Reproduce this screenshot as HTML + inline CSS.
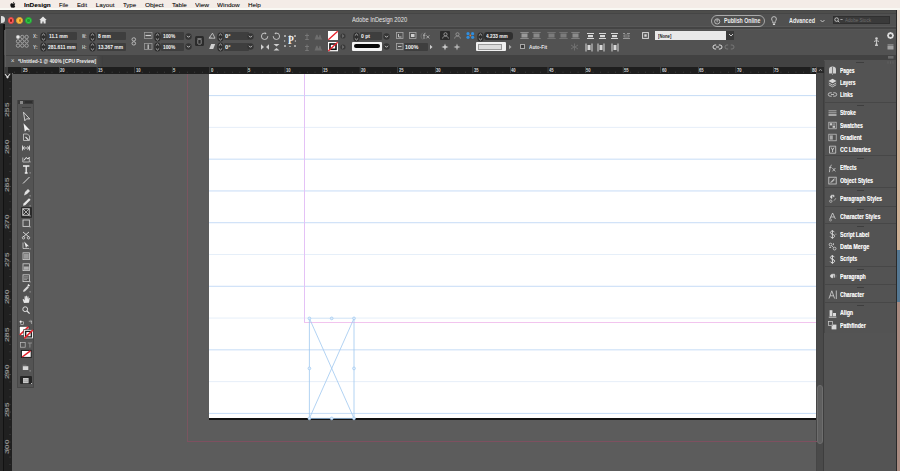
<!DOCTYPE html><html><head><meta charset="utf-8"><style>
*{margin:0;padding:0;box-sizing:border-box}
html,body{width:900px;height:471px;overflow:hidden;background:#5c5c5c;font-family:"Liberation Sans",sans-serif}
.a{position:absolute}
.t{position:absolute;white-space:nowrap;line-height:1}
svg{position:absolute;overflow:visible}
</style></head><body>
<div class="a" style="left:0px;top:0px;width:900px;height:8px;background:#f4ece7;"></div>
<div class="a" style="left:0px;top:8px;width:900px;height:1.6px;background:#f9f8f3;"></div>
<div class="a" style="left:0px;top:9.6px;width:900px;height:0.9px;background:#3c3c3a;"></div>
<svg style="left:9.5px;top:1px" width="6" height="8" viewBox="0 0 6 8"><path d="M4.6 4.3c0-.9.7-1.3.7-1.3-.4-.6-1-.7-1.2-.7-.5-.1-1 .3-1.3.3s-.7-.3-1.1-.3C1 2.3.3 2.8.3 3.9c0 .7.3 1.5.6 2 .3.4.6.9 1 .9.3 0 .5-.3 1-.3s.6.3 1 .3c.4 0 .7-.4.9-.8.3-.4.4-.8.4-.8s-.6-.2-.6-.9zM3.9 1.7c.2-.3.4-.6.3-1-.3 0-.7.2-.9.5-.2.2-.4.6-.3.9.3 0 .7-.2.9-.4z" fill="#151515"/></svg>
<div class="t" style="left:24.00px;top:1.61px;font-size:6.2px;color:#0a0a0a;font-weight:bold;transform:scaleX(1.021);transform-origin:0 0;text-shadow:.2px 0 0 rgba(0,0,0,.35)">InDesign</div>
<div class="t" style="left:59.20px;top:1.61px;font-size:6.2px;color:#0a0a0a;transform:scaleX(0.911);transform-origin:0 0;text-shadow:.2px 0 0 rgba(0,0,0,.35)">File</div>
<div class="t" style="left:76.70px;top:1.61px;font-size:6.2px;color:#0a0a0a;transform:scaleX(0.937);transform-origin:0 0;text-shadow:.2px 0 0 rgba(0,0,0,.35)">Edit</div>
<div class="t" style="left:95.80px;top:1.61px;font-size:6.2px;color:#0a0a0a;text-shadow:.2px 0 0 rgba(0,0,0,.35)">Layout</div>
<div class="t" style="left:123.10px;top:1.61px;font-size:6.2px;color:#0a0a0a;transform:scaleX(0.976);transform-origin:0 0;text-shadow:.2px 0 0 rgba(0,0,0,.35)">Type</div>
<div class="t" style="left:144.70px;top:1.61px;font-size:6.2px;color:#0a0a0a;transform:scaleX(1.040);transform-origin:0 0;text-shadow:.2px 0 0 rgba(0,0,0,.35)">Object</div>
<div class="t" style="left:172.00px;top:1.61px;font-size:6.2px;color:#0a0a0a;text-shadow:.2px 0 0 rgba(0,0,0,.35)">Table</div>
<div class="t" style="left:194.70px;top:1.61px;font-size:6.2px;color:#0a0a0a;transform:scaleX(1.052);transform-origin:0 0;text-shadow:.2px 0 0 rgba(0,0,0,.35)">View</div>
<div class="t" style="left:216.70px;top:1.61px;font-size:6.2px;color:#0a0a0a;transform:scaleX(1.027);transform-origin:0 0;text-shadow:.2px 0 0 rgba(0,0,0,.35)">Window</div>
<div class="t" style="left:248.00px;top:1.61px;font-size:6.2px;color:#0a0a0a;text-shadow:.2px 0 0 rgba(0,0,0,.35)">Help</div>
<div class="a" style="left:0px;top:10px;width:897px;height:461px;background:#464646;"></div>
<div class="a" style="left:897px;top:10px;width:3px;height:120px;background:#eadbd0;"></div>
<div class="a" style="left:897px;top:130px;width:3px;height:120px;background:#cfb195;"></div>
<div class="a" style="left:897px;top:250px;width:3px;height:52px;background:#557893;"></div>
<div class="a" style="left:897px;top:302px;width:3px;height:169px;background:#a88a80;"></div>
<div class="a" style="left:896px;top:10px;width:1px;height:461px;background:#2a2a2a;"></div>
<div class="a" style="left:0px;top:10.5px;width:896px;height:16px;background:#505050;"></div>
<div class="a" style="left:0px;top:10.5px;width:896px;height:2.5px;background:#4d4d4b;"></div>
<div class="a" style="left:0px;top:13px;width:896px;height:0.8px;background:#454545;"></div>
<div class="a" style="left:0px;top:26px;width:896px;height:1px;background:#575757;"></div>
<div class="a" style="left:0px;top:27.3px;width:896px;height:1.4px;background:#444444;"></div>
<div class="a" style="left:0px;top:28.7px;width:896px;height:1px;background:#565656;"></div>
<div class="a" style="left:7.6px;top:17.2px;width:6.8px;height:6.8px;border-radius:50%;background:#fc605c;border:0.6px solid #de4b46"></div>
<div class="a" style="left:16.3px;top:17.2px;width:6.8px;height:6.8px;border-radius:50%;background:#fdbc40;border:0.6px solid #dea236"></div>
<div class="a" style="left:25.0px;top:17.2px;width:6.8px;height:6.8px;border-radius:50%;background:#34c84a;border:0.6px solid #27aa35"></div>
<div class="a" style="left:9.6px;top:19.2px;width:2.8px;height:2.8px;background:#8c1a12;border-radius:50%"></div>
<div class="a" style="left:18.5px;top:19.2px;width:2.6px;height:2.6px;background:#c27d12;border-radius:50%"></div>
<div class="a" style="left:27.2px;top:19.2px;width:2.6px;height:2.6px;background:#1f9a2e;border-radius:50%"></div>
<svg style="left:39px;top:16px" width="8" height="8" viewBox="0 0 8 8"><path d="M4 .5L.3 4h1.1v3.5h2v-2h1.2v2h2V4h1.1z" fill="#e6e6e6"/></svg>
<div class="a" style="left:0px;top:24px;width:3px;height:447px;background:#262626;"></div>
<div class="a" style="left:3px;top:24px;width:1.5px;height:447px;background:#121212;"></div>
<div class="a" style="left:1px;top:15.5px;width:3.5px;height:7px;background:#dcdcdc;border-radius:0 4px 4px 0"></div>
<div class="t" style="left:352.00px;top:16.52px;font-size:6.8px;color:#e4e4e4;transform:scaleX(0.843);transform-origin:0 0;">Adobe InDesign 2020</div>
<div class="a" style="left:710.5px;top:14.6px;width:54.5px;height:12.6px;border-radius:7px;border:1px solid #a9a9a9"></div>
<svg style="left:714px;top:17.6px" width="7" height="7" viewBox="0 0 7 7"><circle cx="3.2" cy="3.4" r="2.6" fill="none" stroke="#cfcfcf" stroke-width=".8"/><path d="M3.2 4.2V1.6M2.2 2.5l1-1 1 1" fill="none" stroke="#cfcfcf" stroke-width=".7"/></svg>
<div class="t" style="left:724.00px;top:17.92px;font-size:6.8px;color:#efefef;font-weight:bold;transform:scaleX(0.765);transform-origin:0 0;">Publish Online</div>
<svg style="left:771px;top:15.6px" width="6" height="10" viewBox="0 0 6 10"><path d="M3 .6A2.4 2.4 0 0 0 .6 3c0 1.1.9 1.8 1.2 2.6v1.3h2.4V5.6C4.5 4.8 5.4 4.1 5.4 3A2.4 2.4 0 0 0 3 .6z" fill="none" stroke="#d8d8d8" stroke-width=".8"/><rect x="1.9" y="7.6" width="2.2" height="1.4" fill="#d8d8d8"/></svg>
<div class="a" style="left:782px;top:14px;width:1px;height:12px;background:#505050;"></div>
<div class="t" style="left:789.30px;top:17.72px;font-size:6.8px;color:#efefef;font-weight:bold;transform:scaleX(0.800);transform-origin:0 0;">Advanced</div>
<svg style="left:819.5px;top:19.3px" width="5" height="4" viewBox="0 0 5 4"><path d="M.5 1l2 2 2-2" fill="none" stroke="#cfcfcf" stroke-width=".9"/></svg>
<div class="a" style="left:832.5px;top:16px;width:57px;height:8px;background:#3a3a3a;border:0.6px solid #303030"></div>
<svg style="left:834px;top:17px" width="10" height="6" viewBox="0 0 10 6"><circle cx="2.6" cy="2.6" r="1.8" fill="none" stroke="#ddd" stroke-width=".8"/><path d="M4 4l1.3 1.3M6.5 2l1 1 1-1" fill="none" stroke="#ddd" stroke-width=".8"/></svg>
<div class="t" style="left:845.00px;top:17.31px;font-size:6px;color:#6e6e6e;transform:scaleX(0.764);transform-origin:0 0;">Adobe Stock</div>
<div class="a" style="left:4px;top:29.7px;width:892px;height:25.3px;background:#525252;"></div>
<svg style="left:15.5px;top:35px" width="13" height="13" viewBox="0 0 13 13"><circle cx="2.0" cy="2.0" r="1.7" fill="#e8e8e8" stroke="#bdbdbd" stroke-width=".7"/><circle cx="2.0" cy="6.3" r="1.7" fill="none" stroke="#bdbdbd" stroke-width=".7"/><circle cx="2.0" cy="10.6" r="1.7" fill="none" stroke="#bdbdbd" stroke-width=".7"/><circle cx="6.3" cy="2.0" r="1.7" fill="none" stroke="#bdbdbd" stroke-width=".7"/><circle cx="6.3" cy="6.3" r="1.7" fill="none" stroke="#bdbdbd" stroke-width=".7"/><circle cx="6.3" cy="10.6" r="1.7" fill="none" stroke="#bdbdbd" stroke-width=".7"/><circle cx="10.6" cy="2.0" r="1.7" fill="none" stroke="#bdbdbd" stroke-width=".7"/><circle cx="10.6" cy="6.3" r="1.7" fill="none" stroke="#bdbdbd" stroke-width=".7"/><circle cx="10.6" cy="10.6" r="1.7" fill="none" stroke="#bdbdbd" stroke-width=".7"/></svg>
<div class="t" style="left:33.00px;top:33.11px;font-size:6px;color:#cdcdcd;font-weight:bold;transform:scaleX(0.750);transform-origin:0 0;">X:</div>
<div class="t" style="left:33.00px;top:43.81px;font-size:6px;color:#cdcdcd;font-weight:bold;transform:scaleX(0.809);transform-origin:0 0;">Y:</div>
<svg style="left:39.5px;top:31.5px" width="7" height="10" viewBox="0 0 7 10"><ellipse cx="3.5" cy="5" rx="3.3" ry="4.6" fill="#2e2e2e"/><path d="M1.8 3.6l1.7-1.6 1.7 1.6M1.8 6.4l1.7 1.6 1.7-1.6" fill="none" stroke="#d0d0d0" stroke-width=".8"/></svg>
<svg style="left:39.5px;top:42px" width="7" height="10" viewBox="0 0 7 10"><ellipse cx="3.5" cy="5" rx="3.3" ry="4.6" fill="#2e2e2e"/><path d="M1.8 3.6l1.7-1.6 1.7 1.6M1.8 6.4l1.7 1.6 1.7-1.6" fill="none" stroke="#d0d0d0" stroke-width=".8"/></svg>
<div class="a" style="left:47px;top:32px;width:30px;height:8px;background:#3e3e3e;border-radius:1px"></div>
<div class="a" style="left:47px;top:42.5px;width:30px;height:8px;background:#3e3e3e;border-radius:1px"></div>
<div class="t" style="left:48.60px;top:33.11px;font-size:6.0px;color:#f6f6f6;font-weight:bold;transform:scaleX(0.794);transform-origin:0 0;">11.1 mm</div>
<div class="t" style="left:48.20px;top:43.81px;font-size:6.0px;color:#f6f6f6;font-weight:bold;transform:scaleX(0.819);transform-origin:0 0;">281.611 mm</div>
<div class="t" style="left:82.00px;top:33.11px;font-size:6px;color:#cdcdcd;font-weight:bold;transform:scaleX(0.595);transform-origin:0 0;">W:</div>
<div class="t" style="left:82.00px;top:43.81px;font-size:6px;color:#cdcdcd;font-weight:bold;transform:scaleX(0.709);transform-origin:0 0;">H:</div>
<svg style="left:88.5px;top:31.5px" width="7" height="10" viewBox="0 0 7 10"><ellipse cx="3.5" cy="5" rx="3.3" ry="4.6" fill="#2e2e2e"/><path d="M1.8 3.6l1.7-1.6 1.7 1.6M1.8 6.4l1.7 1.6 1.7-1.6" fill="none" stroke="#d0d0d0" stroke-width=".8"/></svg>
<svg style="left:88.5px;top:42px" width="7" height="10" viewBox="0 0 7 10"><ellipse cx="3.5" cy="5" rx="3.3" ry="4.6" fill="#2e2e2e"/><path d="M1.8 3.6l1.7-1.6 1.7 1.6M1.8 6.4l1.7 1.6 1.7-1.6" fill="none" stroke="#d0d0d0" stroke-width=".8"/></svg>
<div class="a" style="left:96.5px;top:32px;width:29px;height:8px;background:#3e3e3e;border-radius:1px"></div>
<div class="a" style="left:96.5px;top:42.5px;width:29px;height:8px;background:#3e3e3e;border-radius:1px"></div>
<div class="t" style="left:98.00px;top:33.11px;font-size:6.0px;color:#f6f6f6;font-weight:bold;transform:scaleX(0.816);transform-origin:0 0;">8 mm</div>
<div class="t" style="left:98.00px;top:43.81px;font-size:6.0px;color:#f6f6f6;font-weight:bold;transform:scaleX(0.814);transform-origin:0 0;">13.367 mm</div>
<svg style="left:131px;top:37px" width="6" height="9" viewBox="0 0 6 9"><rect x="1" y=".8" width="3.6" height="3.2" rx="1.6" fill="none" stroke="#cfcfcf" stroke-width=".8"/><rect x="1" y="4.8" width="3.6" height="3.2" rx="1.6" fill="none" stroke="#cfcfcf" stroke-width=".8"/></svg>
<svg style="left:144px;top:32px" width="9" height="7" viewBox="0 0 9 7"><rect x=".5" y=".5" width="7.5" height="6" fill="none" stroke="#9a9a9a" stroke-width=".8"/><path d="M1.5 3.5h5.5" stroke="#cfcfcf" stroke-width="1.2"/></svg>
<svg style="left:144px;top:43px" width="9" height="7" viewBox="0 0 9 7"><rect x=".5" y=".5" width="7.5" height="6" fill="none" stroke="#9a9a9a" stroke-width=".8"/><path d="M4.2 1.5v4.5" stroke="#cfcfcf" stroke-width="1.2"/></svg>
<svg style="left:153.5px;top:31.5px" width="7" height="10" viewBox="0 0 7 10"><ellipse cx="3.5" cy="5" rx="3.3" ry="4.6" fill="#2e2e2e"/><path d="M1.8 3.6l1.7-1.6 1.7 1.6M1.8 6.4l1.7 1.6 1.7-1.6" fill="none" stroke="#d0d0d0" stroke-width=".8"/></svg>
<svg style="left:153.5px;top:42px" width="7" height="10" viewBox="0 0 7 10"><ellipse cx="3.5" cy="5" rx="3.3" ry="4.6" fill="#2e2e2e"/><path d="M1.8 3.6l1.7-1.6 1.7 1.6M1.8 6.4l1.7 1.6 1.7-1.6" fill="none" stroke="#d0d0d0" stroke-width=".8"/></svg>
<div class="a" style="left:161px;top:32px;width:23px;height:8px;background:#3e3e3e;border-radius:1px"></div>
<div class="a" style="left:161px;top:42.5px;width:23px;height:8px;background:#3e3e3e;border-radius:1px"></div>
<div class="t" style="left:162.80px;top:33.11px;font-size:6.0px;color:#f6f6f6;font-weight:bold;transform:scaleX(0.794);transform-origin:0 0;">100%</div>
<div class="t" style="left:162.80px;top:43.81px;font-size:6.0px;color:#f6f6f6;font-weight:bold;transform:scaleX(0.794);transform-origin:0 0;">100%</div>
<svg style="left:184.5px;top:32.5px" width="7" height="7" viewBox="0 0 7 7"><circle cx="3.5" cy="3.5" r="3.2" fill="#353535"/><path d="M2 2.8l1.5 1.5 1.5-1.5" fill="none" stroke="#d0d0d0" stroke-width=".9"/></svg>
<svg style="left:184.5px;top:43px" width="7" height="7" viewBox="0 0 7 7"><circle cx="3.5" cy="3.5" r="3.2" fill="#353535"/><path d="M2 2.8l1.5 1.5 1.5-1.5" fill="none" stroke="#d0d0d0" stroke-width=".9"/></svg>
<div class="a" style="left:194.5px;top:36.3px;width:9px;height:9.5px;background:#2b2b2b;border-radius:1.5px"></div>
<svg style="left:196.5px;top:37.5px" width="5" height="7" viewBox="0 0 5 7"><rect x=".8" y="1.2" width="3.4" height="5" rx=".8" fill="none" stroke="#9c9c9c" stroke-width=".8"/><path d="M.3 .8h4.4" stroke="#9c9c9c" stroke-width=".8"/></svg>
<svg style="left:207.5px;top:32px" width="8" height="7" viewBox="0 0 8 7"><path d="M1 6.2h6L4.5 1.2z" fill="none" stroke="#cfcfcf" stroke-width=".8"/><path d="M3 6.2a2 2 0 0 0-.6-1.6" fill="none" stroke="#cfcfcf" stroke-width=".7"/></svg>
<svg style="left:207.5px;top:43px" width="8" height="7" viewBox="0 0 8 7"><path d="M1.2 6l2-5h4l-2 5z" fill="#cfcfcf"/></svg>
<svg style="left:216.5px;top:31.5px" width="7" height="10" viewBox="0 0 7 10"><ellipse cx="3.5" cy="5" rx="3.3" ry="4.6" fill="#2e2e2e"/><path d="M1.8 3.6l1.7-1.6 1.7 1.6M1.8 6.4l1.7 1.6 1.7-1.6" fill="none" stroke="#d0d0d0" stroke-width=".8"/></svg>
<svg style="left:216.5px;top:42px" width="7" height="10" viewBox="0 0 7 10"><ellipse cx="3.5" cy="5" rx="3.3" ry="4.6" fill="#2e2e2e"/><path d="M1.8 3.6l1.7-1.6 1.7 1.6M1.8 6.4l1.7 1.6 1.7-1.6" fill="none" stroke="#d0d0d0" stroke-width=".8"/></svg>
<div class="a" style="left:224px;top:32px;width:25px;height:8px;background:#3e3e3e;border-radius:1px"></div>
<div class="a" style="left:224px;top:42.5px;width:25px;height:8px;background:#3e3e3e;border-radius:1px"></div>
<div class="t" style="left:225.00px;top:33.11px;font-size:6.0px;color:#f6f6f6;font-weight:bold;transform:scaleX(0.957);transform-origin:0 0;">0&#176;</div>
<div class="t" style="left:225.00px;top:43.81px;font-size:6.0px;color:#f6f6f6;font-weight:bold;transform:scaleX(0.957);transform-origin:0 0;">0&#176;</div>
<svg style="left:246.5px;top:32.5px" width="7" height="7" viewBox="0 0 7 7"><circle cx="3.5" cy="3.5" r="3.2" fill="#353535"/><path d="M2 2.8l1.5 1.5 1.5-1.5" fill="none" stroke="#d0d0d0" stroke-width=".9"/></svg>
<svg style="left:246.5px;top:43px" width="7" height="7" viewBox="0 0 7 7"><circle cx="3.5" cy="3.5" r="3.2" fill="#353535"/><path d="M2 2.8l1.5 1.5 1.5-1.5" fill="none" stroke="#d0d0d0" stroke-width=".9"/></svg>
<svg style="left:259.5px;top:31.5px" width="10" height="8" viewBox="0 0 10 8"><path d="M7.8 4.2A3.2 3.2 0 1 1 5 1.1" fill="none" stroke="#cfcfcf" stroke-width=".9"/><path d="M4.8 .2l1.8 1-1.6 1.3z" fill="#cfcfcf"/></svg>
<svg style="left:271.5px;top:31.5px" width="10" height="8" viewBox="0 0 10 8"><path d="M1.2 4.2A3.2 3.2 0 1 0 4 1.1" fill="none" stroke="#cfcfcf" stroke-width=".9"/><path d="M4.2 .2l-1.8 1 1.6 1.3z" fill="#cfcfcf"/></svg>
<svg style="left:259.5px;top:43px" width="10" height="8" viewBox="0 0 10 8"><path d="M1 1.2l3 2.8-3 2.8zM9 1.2l-3 2.8 3 2.8z" fill="#cfcfcf"/></svg>
<svg style="left:271.5px;top:43px" width="10" height="8" viewBox="0 0 10 8"><path d="M1.5 1h6l-3 2.6zM1.5 7.5h6l-3-2.6z" fill="#cfcfcf"/></svg>
<svg style="left:283.5px;top:34.5px" width="12" height="12" viewBox="0 0 12 12"><g fill="#c8c8c8"><circle cx="1" cy="1" r=".95"/><circle cx="11" cy="1" r=".95"/><circle cx="1" cy="11" r=".95"/><circle cx="11" cy="11" r=".95"/><circle cx="6" cy=".6" r=".7"/><circle cx="6" cy="11.4" r=".7"/><circle cx=".6" cy="6" r=".7"/><circle cx="11.4" cy="6" r=".7"/></g></svg>
<div class="t" style="left:288.2px;top:35.2px;font-size:11.5px;font-family:'Liberation Serif';font-weight:bold;color:#f4f4f4;transform:scaleX(.82);transform-origin:0 0">P</div>
<svg style="left:304px;top:32.5px" width="6" height="7" viewBox="0 0 6 7"><path d="M3 .5v6M1 2.5h4M1.2 6.5h3.6" fill="none" stroke="#7a7a7a" stroke-width=".9"/></svg>
<svg style="left:314px;top:32.5px" width="9" height="7" viewBox="0 0 9 7"><path d="M.5 6.5c1-2 1.5-5 2.5-5s1 3 1.5 3 .8-3 1.5-3 1 4 2.5 5z" fill="#6e6e6e"/></svg>
<svg style="left:304px;top:43.5px" width="6" height="7" viewBox="0 0 6 7"><path d="M3 .5v6M1 2.5h4M1.2 6.5h3.6" fill="none" stroke="#7a7a7a" stroke-width=".9"/></svg>
<svg style="left:314px;top:43.5px" width="9" height="7" viewBox="0 0 9 7"><path d="M.5 6.5c1-2 1.5-5 2.5-5s1 3 1.5 3 .8-3 1.5-3 1 4 2.5 5z" fill="#6e6e6e"/></svg>
<svg style="left:328.3px;top:30.8px" width="10" height="9" viewBox="0 0 10 9"><rect x="0" y="0" width="10" height="9" fill="#fff"/><path d="M.3 8.7L9.7 .3" stroke="#e8202a" stroke-width="1.3"/></svg>
<svg style="left:328.3px;top:42px" width="10" height="9.3" viewBox="0 0 10 9.3"><rect x="0" y="0" width="10" height="9.3" fill="#fff"/><rect x="2" y="2" width="6" height="5.3" fill="none" stroke="#111" stroke-width="1.6"/><path d="M.3 9L9.7 .3" stroke="#e8202a" stroke-width="1.3"/></svg>
<svg style="left:340px;top:32.5px" width="6" height="6" viewBox="0 0 6 6"><circle cx="3" cy="3" r="2.6" fill="#3a3a3a"/><path d="M2.2 1.8l1.3 1.2-1.3 1.2" fill="none" stroke="#bbb" stroke-width=".7"/></svg>
<svg style="left:340px;top:43.5px" width="6" height="6" viewBox="0 0 6 6"><circle cx="3" cy="3" r="2.6" fill="#3a3a3a"/><path d="M2.2 1.8l1.3 1.2-1.3 1.2" fill="none" stroke="#bbb" stroke-width=".7"/></svg>
<svg style="left:352.5px;top:31.5px" width="7" height="10" viewBox="0 0 7 10"><ellipse cx="3.5" cy="5" rx="3.3" ry="4.6" fill="#2e2e2e"/><path d="M1.8 3.6l1.7-1.6 1.7 1.6M1.8 6.4l1.7 1.6 1.7-1.6" fill="none" stroke="#d0d0d0" stroke-width=".8"/></svg>
<div class="a" style="left:360px;top:32px;width:22px;height:8px;background:#3e3e3e;border-radius:1px"></div>
<div class="t" style="left:361.00px;top:33.11px;font-size:6.0px;color:#f6f6f6;font-weight:bold;transform:scaleX(0.843);transform-origin:0 0;">0 pt</div>
<svg style="left:382.5px;top:32.5px" width="7" height="7" viewBox="0 0 7 7"><circle cx="3.5" cy="3.5" r="3.2" fill="#353535"/><path d="M2 2.8l1.5 1.5 1.5-1.5" fill="none" stroke="#d0d0d0" stroke-width=".9"/></svg>
<svg style="left:382.5px;top:43px" width="7" height="7" viewBox="0 0 7 7"><circle cx="3.5" cy="3.5" r="3.2" fill="#353535"/><path d="M2 2.8l1.5 1.5 1.5-1.5" fill="none" stroke="#d0d0d0" stroke-width=".9"/></svg>
<div class="a" style="left:352.1px;top:41.9px;width:29.5px;height:8.9px;background:#f4f4f4;border-radius:1px"></div>
<div class="a" style="left:354px;top:44.3px;width:25.6px;height:4.2px;background:#080808;border-radius:2px"></div>
<svg style="left:395.5px;top:32px" width="8" height="7" viewBox="0 0 8 7"><rect x=".5" y=".5" width="6.5" height="6" fill="none" stroke="#a8a8a8" stroke-width=".8"/><path d="M2.5 2v3h3" fill="none" stroke="#cfcfcf" stroke-width=".9"/></svg>
<svg style="left:409px;top:32px" width="8" height="7" viewBox="0 0 8 7"><rect x=".5" y=".5" width="6.5" height="6" fill="none" stroke="#a8a8a8" stroke-width=".8"/><rect x="2" y="2" width="3.5" height="3" fill="#cfcfcf"/></svg>
<svg style="left:422px;top:31.5px" width="9" height="8" viewBox="0 0 9 8"><path d="M3.5 1.2C2.5 1 2 2 2 3v4M1 3.2h2.4M4.3 3.4l3 3M7.3 3.4l-3 3" fill="none" stroke="#bdbdbd" stroke-width=".8"/><path d="M.8 7.5A4 4 0 0 1 .8 .8" fill="none" stroke="#888" stroke-width=".5"/></svg>
<svg style="left:395.5px;top:43px" width="8" height="7" viewBox="0 0 8 7"><rect x=".5" y=".5" width="6.5" height="6" fill="none" stroke="#a8a8a8" stroke-width=".8"/><path d="M2 3.5h3.5" stroke="#cfcfcf" stroke-width=".9"/></svg>
<div class="a" style="left:404px;top:42.5px;width:24px;height:8px;background:#3e3e3e;border-radius:1px"></div>
<div class="t" style="left:404.90px;top:43.81px;font-size:6.0px;color:#f6f6f6;font-weight:bold;transform:scaleX(0.866);transform-origin:0 0;">100%</div>
<svg style="left:428.5px;top:44px" width="5" height="6" viewBox="0 0 5 6"><path d="M1 .8l2.5 2.2L1 5.2z" fill="#cfcfcf"/></svg>
<div class="a" style="left:440px;top:30.8px;width:10px;height:8.9px;background:#2b2b2b;border-radius:1px"></div>
<svg style="left:441.5px;top:32px" width="7" height="7" viewBox="0 0 7 7"><circle cx="3.5" cy="2.3" r="1.6" fill="none" stroke="#a8a8a8" stroke-width=".8"/><path d="M.6 6.5c.5-2 1.5-2.4 2.9-2.4s2.4.4 2.9 2.4" fill="none" stroke="#a8a8a8" stroke-width=".8"/></svg>
<svg style="left:453.5px;top:32px" width="7" height="7" viewBox="0 0 7 7"><circle cx="3.5" cy="2.3" r="1.6" fill="none" stroke="#a0a0a0" stroke-width=".8"/><path d="M.6 6.5c.5-2 1.5-2.4 2.9-2.4s2.4.4 2.9 2.4" fill="none" stroke="#a0a0a0" stroke-width=".8"/></svg>
<svg style="left:441px;top:43px" width="8" height="8" viewBox="0 0 8 8"><path d="M4 .5l.9 2.6 2.6.9-2.6.9L4 7.5l-.9-2.6L.5 4l2.6-.9z" fill="#c8c8c8"/></svg>
<svg style="left:453px;top:43px" width="8" height="8" viewBox="0 0 8 8"><path d="M4 .5l.9 2.6 2.6.9-2.6.9L4 7.5l-.9-2.6L.5 4l2.6-.9z" fill="#b0b0b0"/></svg>
<svg style="left:465.6px;top:32.4px" width="10" height="7" viewBox="0 0 10 7"><g fill="#2f8ee0"><circle cx="2" cy="1.7" r="1.6"/><circle cx="6.6" cy="1.7" r="1.6"/><circle cx="2" cy="5.3" r="1.6"/><circle cx="6.6" cy="5.3" r="1.6"/></g><circle cx="4.3" cy="3.5" r=".9" fill="#d07a3a"/></svg>
<svg style="left:476.5px;top:31.5px" width="7" height="10" viewBox="0 0 7 10"><ellipse cx="3.5" cy="5" rx="3.3" ry="4.6" fill="#2e2e2e"/><path d="M1.8 3.6l1.7-1.6 1.7 1.6M1.8 6.4l1.7 1.6 1.7-1.6" fill="none" stroke="#d0d0d0" stroke-width=".8"/></svg>
<div class="a" style="left:484.4px;top:32px;width:28.4px;height:8px;background:#2f2f2f;border-radius:3px"></div>
<div class="t" style="left:486.00px;top:33.11px;font-size:6.0px;color:#f6f6f6;font-weight:bold;transform:scaleX(0.797);transform-origin:0 0;">4.233 mm</div>
<div class="a" style="left:476.1px;top:41.9px;width:30px;height:9.4px;background:#f0f0f0;border-radius:1px"></div>
<div class="a" style="left:478px;top:43.5px;width:24px;height:6px;background:#dcdcdc;border:.6px solid #9a9a9a"></div>
<svg style="left:508px;top:44px" width="5" height="6" viewBox="0 0 5 6"><path d="M1 .8l2.5 2.2L1 5.2z" fill="#a8a8a8"/></svg>
<svg style="left:519.5px;top:32.0px" width="9" height="7" viewBox="0 0 9 7"><rect x="1.5" y="1.5" width="6" height="4" fill="#9a9a9a"/><path d="M.3 .5h8.4M.3 6.5h8.4" stroke="#9a9a9a" stroke-width=".8"/></svg>
<svg style="left:531.5px;top:32.0px" width="9" height="7" viewBox="0 0 9 7"><rect x="1.5" y="1.5" width="6" height="4" fill="#8a8a8a"/><path d="M.3 .5h8.4M.3 6.5h8.4" stroke="#8a8a8a" stroke-width=".8"/></svg>
<svg style="left:546.8px;top:32.0px" width="9" height="7" viewBox="0 0 9 7"><rect x="1.5" y="1.5" width="6" height="4" fill="#7c7c7c"/><path d="M.3 .5h8.4M.3 6.5h8.4" stroke="#7c7c7c" stroke-width=".8"/></svg>
<svg style="left:558.8px;top:32.0px" width="9" height="7" viewBox="0 0 9 7"><rect x="1.5" y="1.5" width="6" height="4" fill="#7c7c7c"/><path d="M.3 .5h8.4M.3 6.5h8.4" stroke="#7c7c7c" stroke-width=".8"/></svg>
<svg style="left:570.8px;top:32.0px" width="9" height="7" viewBox="0 0 9 7"><rect x="1.5" y="1.5" width="6" height="4" fill="#8c8c8c"/><path d="M.3 .5h8.4M.3 6.5h8.4" stroke="#8c8c8c" stroke-width=".8"/></svg>
<svg style="left:586.2px;top:31.5px" width="9" height="8" viewBox="0 0 9 8"><path d="M1 1.5h7M1 6.5h7" stroke="#d8d8d8" stroke-width="1"/><rect x="2" y="3" width="5" height="2.2" fill="#d8d8d8"/></svg>
<svg style="left:597.5px;top:31.5px" width="9" height="8" viewBox="0 0 9 8"><path d="M1 1.5h7M1 6.5h7" stroke="#d8d8d8" stroke-width="1"/><rect x="2" y="3" width="5" height="2.2" fill="#d8d8d8"/></svg>
<svg style="left:610.2px;top:31.5px" width="9" height="8" viewBox="0 0 9 8"><path d="M1 1.5h7M1 6.5h7" stroke="#d8d8d8" stroke-width="1"/><rect x="2" y="3" width="5" height="2.2" fill="#d8d8d8"/></svg>
<svg style="left:622px;top:31.5px" width="9" height="8" viewBox="0 0 9 8"><path d="M1 1.5h2M5 1.5h3M1 6.5h7" stroke="#aaa" stroke-width=".8"/><rect x="2" y="3" width="5" height="2" fill="none" stroke="#aaa" stroke-width=".6"/></svg>
<div class="a" style="left:519.5px;top:43.6px;width:5.5px;height:5.5px;background:#3a3a3a;border:.7px solid #a8a8a8"></div>
<div class="t" style="left:528.70px;top:44.01px;font-size:6px;color:#e6e6e6;font-weight:bold;transform:scaleX(0.783);transform-origin:0 0;">Auto-Fit</div>
<svg style="left:570px;top:43px" width="9" height="8" viewBox="0 0 9 8"><path d="M4.5 .5v7M1 2l3 2-3 2M8 2L5 4l3 2" fill="none" stroke="#777" stroke-width=".8"/></svg>
<svg style="left:585.3px;top:42.5px" width="8" height="9" viewBox="0 0 8 9"><path d="M1 .5v8M7 .5v8" stroke="#d8d8d8" stroke-width="1"/><rect x="2.5" y="2" width="3" height="5" fill="#d8d8d8"/></svg>
<svg style="left:597.3px;top:42.5px" width="8" height="9" viewBox="0 0 8 9"><path d="M1 .5v8M7 .5v8" stroke="#d8d8d8" stroke-width="1"/><rect x="2.5" y="2" width="3" height="5" fill="#d8d8d8"/></svg>
<svg style="left:610.7px;top:42.5px" width="8" height="9" viewBox="0 0 8 9"><path d="M1 .5v8M7 .5v8" stroke="#d8d8d8" stroke-width="1"/><rect x="2.5" y="2" width="3" height="5" fill="#d8d8d8"/></svg>
<svg style="left:642px;top:32px" width="7" height="7" viewBox="0 0 7 7"><rect x=".6" y=".6" width="5.8" height="5.8" fill="none" stroke="#d8d8d8" stroke-width="1"/><rect x="2.3" y="2.3" width="2.4" height="2.4" fill="#d8d8d8"/></svg>
<div class="a" style="left:654.7px;top:31.3px;width:71.3px;height:8.7px;background:#e9e9e9;"></div>
<div class="t" style="left:658.00px;top:32.71px;font-size:6px;color:#1e1e1e;font-weight:bold;transform:scaleX(0.700);transform-origin:0 0;">[None]</div>
<div class="a" style="left:726px;top:31.3px;width:8.4px;height:8.7px;background:#3a3a3a;"></div>
<svg style="left:727.5px;top:33px" width="6" height="5" viewBox="0 0 6 5"><path d="M1 1l2 2 2-2" fill="none" stroke="#ddd" stroke-width=".9"/></svg>
<svg style="left:712.5px;top:44px" width="9" height="6" viewBox="0 0 9 6"><path d="M3.2 1H2a2 2 0 0 0 0 4h1.2M5.8 1H7a2 2 0 0 1 0 4H5.8M3 3h3" fill="none" stroke="#e0e0e0" stroke-width="1"/></svg>
<svg style="left:724.5px;top:44px" width="9" height="6" viewBox="0 0 9 6"><path d="M3.2 1H2a2 2 0 0 0 0 4h1.2M5.8 1H7a2 2 0 0 1 0 4H5.8" fill="none" stroke="#7a7a7a" stroke-width=".9"/></svg>
<svg style="left:873px;top:36.5px" width="7" height="10" viewBox="0 0 7 10"><circle cx="3.5" cy="1.6" r="1.3" fill="#cfcfcf"/><path d="M3.5 3v6M1 4.5l2.5-1 2.5 1M2.3 9l1.2-3 1.2 3" fill="none" stroke="#cfcfcf" stroke-width=".9"/></svg>
<svg style="left:886.8px;top:31.6px" width="7" height="7" viewBox="0 0 7 7"><circle cx="3.5" cy="3.5" r="2.4" fill="none" stroke="#dcdcdc" stroke-width="1.6"/><path d="M3.5 .2v1.2M3.5 5.6v1.2M.2 3.5h1.2M5.6 3.5h1.2" stroke="#dcdcdc" stroke-width=".9"/></svg>
<svg style="left:886.5px;top:44px" width="7" height="6" viewBox="0 0 7 6"><rect x=".5" y="1.5" width="6" height="4" fill="#a0a0a0"/><path d="M.5 .5h6" stroke="#a0a0a0" stroke-width=".6"/></svg>
<div class="a" style="left:4px;top:54.6px;width:892px;height:0.8px;background:#444;"></div>
<div class="a" style="left:4px;top:55px;width:892px;height:12px;background:#424242;"></div>
<div class="a" style="left:5px;top:55.5px;width:92px;height:11.5px;background:#525252;"></div>
<div class="a" style="left:97px;top:55.5px;width:6px;height:11.5px;background:linear-gradient(90deg,#4a4a4a,#3f3f3f)"></div>
<div class="t" style="left:10.80px;top:57.87px;font-size:6.5px;color:#d0d0d0;">&#215;</div>
<div class="t" style="left:18.00px;top:58.01px;font-size:6.2px;color:#f0f0f0;font-weight:bold;transform:scaleX(0.778);transform-origin:0 0;">*Untitled-1 @ 400% [CPU Preview]</div>
<div class="a" style="left:4.5px;top:29.7px;width:0.8px;height:37.3px;background:#5e5e5e;"></div>
<div class="a" style="left:4px;top:67px;width:4px;height:6.5px;background:#3c3c3c;"></div>
<div class="a" style="left:8px;top:67px;width:808px;height:6.5px;background:#1e1e1e;"></div>
<div class="a" style="left:4px;top:73px;width:7.5px;height:398px;background:#202020;"></div>
<div class="a" style="left:11.5px;top:73px;width:1px;height:398px;background:#6a6a6a;"></div>
<svg style="left:13px;top:67px" width="803" height="6" viewBox="0 0 803 6"><rect x="1.11" y="4.6" width=".6" height="1.4" fill="#444"/><rect x="8.62" y="0" width=".7" height="6" fill="#555"/><rect x="16.14" y="4.6" width=".6" height="1.4" fill="#444"/><rect x="23.66" y="4.6" width=".6" height="1.4" fill="#444"/><rect x="31.17" y="4.6" width=".6" height="1.4" fill="#444"/><rect x="38.69" y="4.6" width=".6" height="1.4" fill="#444"/><rect x="46.20" y="0" width=".7" height="6" fill="#555"/><rect x="53.72" y="4.6" width=".6" height="1.4" fill="#444"/><rect x="61.23" y="4.6" width=".6" height="1.4" fill="#444"/><rect x="68.75" y="4.6" width=".6" height="1.4" fill="#444"/><rect x="76.26" y="4.6" width=".6" height="1.4" fill="#444"/><rect x="83.78" y="0" width=".7" height="6" fill="#555"/><rect x="91.29" y="4.6" width=".6" height="1.4" fill="#444"/><rect x="98.81" y="4.6" width=".6" height="1.4" fill="#444"/><rect x="106.32" y="4.6" width=".6" height="1.4" fill="#444"/><rect x="113.84" y="4.6" width=".6" height="1.4" fill="#444"/><rect x="121.35" y="0" width=".7" height="6" fill="#555"/><rect x="128.87" y="4.6" width=".6" height="1.4" fill="#444"/><rect x="136.38" y="4.6" width=".6" height="1.4" fill="#444"/><rect x="143.90" y="4.6" width=".6" height="1.4" fill="#444"/><rect x="151.41" y="4.6" width=".6" height="1.4" fill="#444"/><rect x="158.93" y="0" width=".7" height="6" fill="#555"/><rect x="166.44" y="4.6" width=".6" height="1.4" fill="#444"/><rect x="173.96" y="4.6" width=".6" height="1.4" fill="#444"/><rect x="181.47" y="4.6" width=".6" height="1.4" fill="#444"/><rect x="188.99" y="4.6" width=".6" height="1.4" fill="#444"/><rect x="196.50" y="0" width=".7" height="6" fill="#555"/><rect x="204.01" y="4.6" width=".6" height="1.4" fill="#444"/><rect x="211.53" y="4.6" width=".6" height="1.4" fill="#444"/><rect x="219.04" y="4.6" width=".6" height="1.4" fill="#444"/><rect x="226.56" y="4.6" width=".6" height="1.4" fill="#444"/><rect x="234.07" y="0" width=".7" height="6" fill="#555"/><rect x="241.59" y="4.6" width=".6" height="1.4" fill="#444"/><rect x="249.11" y="4.6" width=".6" height="1.4" fill="#444"/><rect x="256.62" y="4.6" width=".6" height="1.4" fill="#444"/><rect x="264.13" y="4.6" width=".6" height="1.4" fill="#444"/><rect x="271.65" y="0" width=".7" height="6" fill="#555"/><rect x="279.16" y="4.6" width=".6" height="1.4" fill="#444"/><rect x="286.68" y="4.6" width=".6" height="1.4" fill="#444"/><rect x="294.19" y="4.6" width=".6" height="1.4" fill="#444"/><rect x="301.71" y="4.6" width=".6" height="1.4" fill="#444"/><rect x="309.23" y="0" width=".7" height="6" fill="#555"/><rect x="316.74" y="4.6" width=".6" height="1.4" fill="#444"/><rect x="324.25" y="4.6" width=".6" height="1.4" fill="#444"/><rect x="331.77" y="4.6" width=".6" height="1.4" fill="#444"/><rect x="339.28" y="4.6" width=".6" height="1.4" fill="#444"/><rect x="346.80" y="0" width=".7" height="6" fill="#555"/><rect x="354.31" y="4.6" width=".6" height="1.4" fill="#444"/><rect x="361.83" y="4.6" width=".6" height="1.4" fill="#444"/><rect x="369.35" y="4.6" width=".6" height="1.4" fill="#444"/><rect x="376.86" y="4.6" width=".6" height="1.4" fill="#444"/><rect x="384.38" y="0" width=".7" height="6" fill="#555"/><rect x="391.89" y="4.6" width=".6" height="1.4" fill="#444"/><rect x="399.40" y="4.6" width=".6" height="1.4" fill="#444"/><rect x="406.92" y="4.6" width=".6" height="1.4" fill="#444"/><rect x="414.44" y="4.6" width=".6" height="1.4" fill="#444"/><rect x="421.95" y="0" width=".7" height="6" fill="#555"/><rect x="429.47" y="4.6" width=".6" height="1.4" fill="#444"/><rect x="436.98" y="4.6" width=".6" height="1.4" fill="#444"/><rect x="444.50" y="4.6" width=".6" height="1.4" fill="#444"/><rect x="452.01" y="4.6" width=".6" height="1.4" fill="#444"/><rect x="459.52" y="0" width=".7" height="6" fill="#555"/><rect x="467.04" y="4.6" width=".6" height="1.4" fill="#444"/><rect x="474.56" y="4.6" width=".6" height="1.4" fill="#444"/><rect x="482.07" y="4.6" width=".6" height="1.4" fill="#444"/><rect x="489.58" y="4.6" width=".6" height="1.4" fill="#444"/><rect x="497.10" y="0" width=".7" height="6" fill="#555"/><rect x="504.62" y="4.6" width=".6" height="1.4" fill="#444"/><rect x="512.13" y="4.6" width=".6" height="1.4" fill="#444"/><rect x="519.64" y="4.6" width=".6" height="1.4" fill="#444"/><rect x="527.16" y="4.6" width=".6" height="1.4" fill="#444"/><rect x="534.67" y="0" width=".7" height="6" fill="#555"/><rect x="542.19" y="4.6" width=".6" height="1.4" fill="#444"/><rect x="549.70" y="4.6" width=".6" height="1.4" fill="#444"/><rect x="557.22" y="4.6" width=".6" height="1.4" fill="#444"/><rect x="564.73" y="4.6" width=".6" height="1.4" fill="#444"/><rect x="572.25" y="0" width=".7" height="6" fill="#555"/><rect x="579.76" y="4.6" width=".6" height="1.4" fill="#444"/><rect x="587.28" y="4.6" width=".6" height="1.4" fill="#444"/><rect x="594.79" y="4.6" width=".6" height="1.4" fill="#444"/><rect x="602.31" y="4.6" width=".6" height="1.4" fill="#444"/><rect x="609.83" y="0" width=".7" height="6" fill="#555"/><rect x="617.34" y="4.6" width=".6" height="1.4" fill="#444"/><rect x="624.86" y="4.6" width=".6" height="1.4" fill="#444"/><rect x="632.37" y="4.6" width=".6" height="1.4" fill="#444"/><rect x="639.88" y="4.6" width=".6" height="1.4" fill="#444"/><rect x="647.40" y="0" width=".7" height="6" fill="#555"/><rect x="654.91" y="4.6" width=".6" height="1.4" fill="#444"/><rect x="662.43" y="4.6" width=".6" height="1.4" fill="#444"/><rect x="669.94" y="4.6" width=".6" height="1.4" fill="#444"/><rect x="677.46" y="4.6" width=".6" height="1.4" fill="#444"/><rect x="684.97" y="0" width=".7" height="6" fill="#555"/><rect x="692.49" y="4.6" width=".6" height="1.4" fill="#444"/><rect x="700.00" y="4.6" width=".6" height="1.4" fill="#444"/><rect x="707.52" y="4.6" width=".6" height="1.4" fill="#444"/><rect x="715.03" y="4.6" width=".6" height="1.4" fill="#444"/><rect x="722.55" y="0" width=".7" height="6" fill="#555"/><rect x="730.06" y="4.6" width=".6" height="1.4" fill="#444"/><rect x="737.58" y="4.6" width=".6" height="1.4" fill="#444"/><rect x="745.10" y="4.6" width=".6" height="1.4" fill="#444"/><rect x="752.61" y="4.6" width=".6" height="1.4" fill="#444"/><rect x="760.12" y="0" width=".7" height="6" fill="#555"/><rect x="767.64" y="4.6" width=".6" height="1.4" fill="#444"/><rect x="775.15" y="4.6" width=".6" height="1.4" fill="#444"/><rect x="782.67" y="4.6" width=".6" height="1.4" fill="#444"/><rect x="790.18" y="4.6" width=".6" height="1.4" fill="#444"/><rect x="797.70" y="0" width=".7" height="6" fill="#555"/></svg>
<div class="t" style="left:22.82px;top:67.60px;font-size:5.4px;color:#d4d4d4;font-weight:bold;transform:scaleX(0.780);transform-origin:0 0;">25</div>
<div class="t" style="left:60.40px;top:67.60px;font-size:5.4px;color:#d4d4d4;font-weight:bold;transform:scaleX(0.780);transform-origin:0 0;">20</div>
<div class="t" style="left:97.98px;top:67.60px;font-size:5.4px;color:#d4d4d4;font-weight:bold;transform:scaleX(0.780);transform-origin:0 0;">15</div>
<div class="t" style="left:135.55px;top:67.60px;font-size:5.4px;color:#d4d4d4;font-weight:bold;transform:scaleX(0.780);transform-origin:0 0;">10</div>
<div class="t" style="left:173.12px;top:67.60px;font-size:5.4px;color:#d4d4d4;font-weight:bold;transform:scaleX(0.780);transform-origin:0 0;">5</div>
<div class="t" style="left:210.70px;top:67.60px;font-size:5.4px;color:#d4d4d4;font-weight:bold;transform:scaleX(0.780);transform-origin:0 0;">0</div>
<div class="t" style="left:248.27px;top:67.60px;font-size:5.4px;color:#d4d4d4;font-weight:bold;transform:scaleX(0.780);transform-origin:0 0;">5</div>
<div class="t" style="left:285.85px;top:67.60px;font-size:5.4px;color:#d4d4d4;font-weight:bold;transform:scaleX(0.780);transform-origin:0 0;">10</div>
<div class="t" style="left:323.43px;top:67.60px;font-size:5.4px;color:#d4d4d4;font-weight:bold;transform:scaleX(0.780);transform-origin:0 0;">15</div>
<div class="t" style="left:361.00px;top:67.60px;font-size:5.4px;color:#d4d4d4;font-weight:bold;transform:scaleX(0.780);transform-origin:0 0;">20</div>
<div class="t" style="left:398.57px;top:67.60px;font-size:5.4px;color:#d4d4d4;font-weight:bold;transform:scaleX(0.780);transform-origin:0 0;">25</div>
<div class="t" style="left:436.15px;top:67.60px;font-size:5.4px;color:#d4d4d4;font-weight:bold;transform:scaleX(0.780);transform-origin:0 0;">30</div>
<div class="t" style="left:473.72px;top:67.60px;font-size:5.4px;color:#d4d4d4;font-weight:bold;transform:scaleX(0.780);transform-origin:0 0;">35</div>
<div class="t" style="left:511.30px;top:67.60px;font-size:5.4px;color:#d4d4d4;font-weight:bold;transform:scaleX(0.780);transform-origin:0 0;">40</div>
<div class="t" style="left:548.88px;top:67.60px;font-size:5.4px;color:#d4d4d4;font-weight:bold;transform:scaleX(0.780);transform-origin:0 0;">45</div>
<div class="t" style="left:586.45px;top:67.60px;font-size:5.4px;color:#d4d4d4;font-weight:bold;transform:scaleX(0.780);transform-origin:0 0;">50</div>
<div class="t" style="left:624.03px;top:67.60px;font-size:5.4px;color:#d4d4d4;font-weight:bold;transform:scaleX(0.780);transform-origin:0 0;">55</div>
<div class="t" style="left:661.60px;top:67.60px;font-size:5.4px;color:#d4d4d4;font-weight:bold;transform:scaleX(0.780);transform-origin:0 0;">60</div>
<div class="t" style="left:699.17px;top:67.60px;font-size:5.4px;color:#d4d4d4;font-weight:bold;transform:scaleX(0.780);transform-origin:0 0;">65</div>
<div class="t" style="left:736.75px;top:67.60px;font-size:5.4px;color:#d4d4d4;font-weight:bold;transform:scaleX(0.780);transform-origin:0 0;">70</div>
<div class="t" style="left:774.33px;top:67.60px;font-size:5.4px;color:#d4d4d4;font-weight:bold;transform:scaleX(0.780);transform-origin:0 0;">75</div>
<div class="t" style="left:811.90px;top:67.60px;font-size:5.4px;color:#d4d4d4;font-weight:bold;transform:scaleX(0.780);transform-origin:0 0;">80</div>
<svg style="left:4px;top:73px" width="7" height="398" viewBox="0 0 7 398"><rect x="0" y="0.50" width="7" height=".7" fill="#555"/><rect x="5.2" y="8.02" width="1.6" height=".6" fill="#444"/><rect x="5.2" y="15.53" width="1.6" height=".6" fill="#444"/><rect x="5.2" y="23.05" width="1.6" height=".6" fill="#444"/><rect x="5.2" y="30.56" width="1.6" height=".6" fill="#444"/><rect x="0" y="38.07" width="7" height=".7" fill="#555"/><rect x="5.2" y="45.59" width="1.6" height=".6" fill="#444"/><rect x="5.2" y="53.10" width="1.6" height=".6" fill="#444"/><rect x="5.2" y="60.62" width="1.6" height=".6" fill="#444"/><rect x="5.2" y="68.13" width="1.6" height=".6" fill="#444"/><rect x="0" y="75.65" width="7" height=".7" fill="#555"/><rect x="5.2" y="83.16" width="1.6" height=".6" fill="#444"/><rect x="5.2" y="90.68" width="1.6" height=".6" fill="#444"/><rect x="5.2" y="98.19" width="1.6" height=".6" fill="#444"/><rect x="5.2" y="105.71" width="1.6" height=".6" fill="#444"/><rect x="0" y="113.22" width="7" height=".7" fill="#555"/><rect x="5.2" y="120.74" width="1.6" height=".6" fill="#444"/><rect x="5.2" y="128.25" width="1.6" height=".6" fill="#444"/><rect x="5.2" y="135.77" width="1.6" height=".6" fill="#444"/><rect x="5.2" y="143.28" width="1.6" height=".6" fill="#444"/><rect x="0" y="150.80" width="7" height=".7" fill="#555"/><rect x="5.2" y="158.31" width="1.6" height=".6" fill="#444"/><rect x="5.2" y="165.83" width="1.6" height=".6" fill="#444"/><rect x="5.2" y="173.34" width="1.6" height=".6" fill="#444"/><rect x="5.2" y="180.86" width="1.6" height=".6" fill="#444"/><rect x="0" y="188.38" width="7" height=".7" fill="#555"/><rect x="5.2" y="195.89" width="1.6" height=".6" fill="#444"/><rect x="5.2" y="203.40" width="1.6" height=".6" fill="#444"/><rect x="5.2" y="210.92" width="1.6" height=".6" fill="#444"/><rect x="5.2" y="218.44" width="1.6" height=".6" fill="#444"/><rect x="0" y="225.95" width="7" height=".7" fill="#555"/><rect x="5.2" y="233.47" width="1.6" height=".6" fill="#444"/><rect x="5.2" y="240.98" width="1.6" height=".6" fill="#444"/><rect x="5.2" y="248.50" width="1.6" height=".6" fill="#444"/><rect x="5.2" y="256.01" width="1.6" height=".6" fill="#444"/><rect x="0" y="263.52" width="7" height=".7" fill="#555"/><rect x="5.2" y="271.04" width="1.6" height=".6" fill="#444"/><rect x="5.2" y="278.56" width="1.6" height=".6" fill="#444"/><rect x="5.2" y="286.07" width="1.6" height=".6" fill="#444"/><rect x="5.2" y="293.58" width="1.6" height=".6" fill="#444"/><rect x="0" y="301.10" width="7" height=".7" fill="#555"/><rect x="5.2" y="308.62" width="1.6" height=".6" fill="#444"/><rect x="5.2" y="316.13" width="1.6" height=".6" fill="#444"/><rect x="5.2" y="323.64" width="1.6" height=".6" fill="#444"/><rect x="5.2" y="331.16" width="1.6" height=".6" fill="#444"/><rect x="0" y="338.68" width="7" height=".7" fill="#555"/><rect x="5.2" y="346.19" width="1.6" height=".6" fill="#444"/><rect x="5.2" y="353.70" width="1.6" height=".6" fill="#444"/><rect x="5.2" y="361.22" width="1.6" height=".6" fill="#444"/><rect x="5.2" y="368.73" width="1.6" height=".6" fill="#444"/><rect x="0" y="376.25" width="7" height=".7" fill="#555"/><rect x="5.2" y="383.76" width="1.6" height=".6" fill="#444"/><rect x="5.2" y="391.28" width="1.6" height=".6" fill="#444"/></svg>
<div class="t" style="left:5.4px;top:116.60px;font-size:5px;font-weight:bold;color:#8e8e8e;transform:rotate(-90deg) scaleX(1.75);transform-origin:0 0">255</div>
<div class="t" style="left:5.4px;top:154.10px;font-size:5px;font-weight:bold;color:#8e8e8e;transform:rotate(-90deg) scaleX(1.75);transform-origin:0 0">260</div>
<div class="t" style="left:5.4px;top:191.60px;font-size:5px;font-weight:bold;color:#8e8e8e;transform:rotate(-90deg) scaleX(1.75);transform-origin:0 0">265</div>
<div class="t" style="left:5.4px;top:229.10px;font-size:5px;font-weight:bold;color:#8e8e8e;transform:rotate(-90deg) scaleX(1.75);transform-origin:0 0">270</div>
<div class="t" style="left:5.4px;top:266.60px;font-size:5px;font-weight:bold;color:#8e8e8e;transform:rotate(-90deg) scaleX(1.75);transform-origin:0 0">275</div>
<div class="t" style="left:5.4px;top:304.10px;font-size:5px;font-weight:bold;color:#8e8e8e;transform:rotate(-90deg) scaleX(1.75);transform-origin:0 0">280</div>
<div class="t" style="left:5.4px;top:341.60px;font-size:5px;font-weight:bold;color:#8e8e8e;transform:rotate(-90deg) scaleX(1.75);transform-origin:0 0">285</div>
<div class="t" style="left:5.4px;top:379.10px;font-size:5px;font-weight:bold;color:#8e8e8e;transform:rotate(-90deg) scaleX(1.75);transform-origin:0 0">290</div>
<div class="t" style="left:5.4px;top:416.60px;font-size:5px;font-weight:bold;color:#8e8e8e;transform:rotate(-90deg) scaleX(1.75);transform-origin:0 0">295</div>
<div class="t" style="left:5.4px;top:454.10px;font-size:5px;font-weight:bold;color:#8e8e8e;transform:rotate(-90deg) scaleX(1.75);transform-origin:0 0">300</div>
<div class="a" style="left:12px;top:73.5px;width:804px;height:398px;background:#5c5c5c;"></div>
<div class="a" style="left:186.6px;top:73.5px;width:700px;height:368.3px;border-left:1.3px solid #7a5560;border-bottom:1.3px solid #7e5060"></div>
<div class="a" style="left:209px;top:73.5px;width:607px;height:345px;background:#ffffff;"></div>
<div class="a" style="left:209px;top:418.3px;width:607px;height:1.4px;background:#111;"></div>
<svg style="left:209px;top:73.5px" width="607" height="345" viewBox="0 0 607 345"><rect x="0" y="21.10" width="607" height="1" fill="#c6dcf6"/><rect x="0" y="52.88" width="607" height="1" fill="#e6eff9"/><rect x="0" y="84.66" width="607" height="1" fill="#c6dcf6"/><rect x="0" y="116.44" width="607" height="1" fill="#c6dcf6"/><rect x="0" y="148.22" width="607" height="1" fill="#c6dcf6"/><rect x="0" y="180.00" width="607" height="1" fill="#e6eff9"/><rect x="0" y="211.78" width="607" height="1" fill="#c6dcf6"/><rect x="0" y="243.56" width="607" height="1" fill="#e6eff9"/><rect x="0" y="275.34" width="607" height="1" fill="#c6dcf6"/><rect x="0" y="307.12" width="607" height="1" fill="#e6eff9"/><rect x="0" y="338.90" width="607" height="1" fill="#c6dcf6"/></svg>
<div class="a" style="left:304px;top:73.5px;width:1px;height:249.2px;background:#e4c2f6;"></div>
<div class="a" style="left:304px;top:322.2px;width:512px;height:1.2px;background:#f2c4ee;"></div>
<svg style="left:309px;top:318px" width="46" height="101" viewBox="0 0 46 101"><g fill="none" stroke="#9fc8f0" stroke-width=".8"><path d="M.4 .4v100M45 .4v100M.4 100.4H45"/><path d="M.4 .4H45" stroke="#d4e6f8"/><path d="M.4 .4L45 100.4M45 .4L.4 100.4"/></g><circle cx="0.4" cy="0.4" r="1.4" fill="#dcebfa" stroke="#9fc8f0" stroke-width=".7"/><circle cx="22.7" cy="0.4" r="1.4" fill="#dcebfa" stroke="#9fc8f0" stroke-width=".7"/><circle cx="45" cy="0.4" r="1.4" fill="#dcebfa" stroke="#9fc8f0" stroke-width=".7"/><circle cx="0.4" cy="50.4" r="1.4" fill="#dcebfa" stroke="#9fc8f0" stroke-width=".7"/><circle cx="45" cy="50.4" r="1.4" fill="#dcebfa" stroke="#9fc8f0" stroke-width=".7"/><circle cx="0.4" cy="100.4" r="1.4" fill="#dcebfa" stroke="#9fc8f0" stroke-width=".7"/><circle cx="22.7" cy="100.4" r="1.4" fill="#dcebfa" stroke="#9fc8f0" stroke-width=".7"/><circle cx="45" cy="100.4" r="1.4" fill="#dcebfa" stroke="#9fc8f0" stroke-width=".7"/></svg>
<div class="a" style="left:17px;top:100px;width:16.5px;height:288px;background:#535353;border:0.7px solid #474747"></div>
<div class="a" style="left:17.5px;top:100.3px;width:15.6px;height:4.2px;background:#3a3a3a;"></div>
<div class="a" style="left:19.8px;top:101.2px;width:3.2px;height:2.4px;background:#8a8a8a;"></div>
<div class="a" style="left:24.5px;top:101.4px;width:7.5px;height:2px;background:#2e2e2e;"></div>
<div class="a" style="left:22px;top:107.2px;width:9px;height:0.8px;background:#3e3e3e;"></div>
<svg style="left:21.0px;top:111.0px" width="10" height="10" viewBox="0 0 10 10"><path d="M2.5 1.2L8.8 8 5.6 7.8 3.8 9.8z" fill="none" stroke="#d8d8d8" stroke-width=".9" stroke-linejoin="round"/></svg>
<svg style="left:21.0px;top:122.0px" width="10" height="10" viewBox="0 0 10 10"><path d="M2.5 1.2L8.8 8 5.6 7.8 3.8 9.8z" fill="#f2f2f2"/><rect x="7.5" y="8.3" width="1.2" height="1.2" fill="#bbb"/></svg>
<svg style="left:21.0px;top:132.4px" width="10" height="10" viewBox="0 0 10 10"><path d="M2.5 2h4l2 2v4.5h-6z" fill="none" stroke="#cfcfcf" stroke-width=".8"/><path d="M4.5 5l3 3" stroke="#e0e0e0" stroke-width="1.1"/></svg>
<svg style="left:21.0px;top:143.0px" width="10" height="10" viewBox="0 0 10 10"><path d="M1.5 2.5v5M8.5 2.5v5M1.5 5h7M3.5 3.2L1.8 5l1.7 1.8M6.5 3.2L8.2 5 6.5 6.8" fill="none" stroke="#e0e0e0" stroke-width=".9"/></svg>
<svg style="left:21.0px;top:153.2px" width="10" height="10" viewBox="0 0 10 10"><path d="M1.8 4.5v4.5h6.5V4.5" fill="none" stroke="#cfcfcf" stroke-width=".8"/><path d="M3 7.5l2-3 2 1.5 1.5-2" fill="none" stroke="#e8e8e8" stroke-width="1"/><rect x="8.6" y="8.4" width="1" height="1" fill="#bbb"/></svg>
<svg style="left:21.0px;top:164.0px" width="10" height="10" viewBox="0 0 10 10"><path d="M2 2h6.4M5.2 2v7M3.8 9h2.8" fill="none" stroke="#f0f0f0" stroke-width="1.3"/><rect x="8.6" y="8.4" width="1" height="1" fill="#bbb"/></svg>
<svg style="left:21.0px;top:175.0px" width="10" height="10" viewBox="0 0 10 10"><path d="M2 8.5L8.5 2" stroke="#e0e0e0" stroke-width="1"/></svg>
<svg style="left:21.0px;top:187.0px" width="10" height="10" viewBox="0 0 10 10"><path d="M3 8.5l1-3.5 3-3 2 2-3 3z" fill="#e0e0e0"/><rect x="8.6" y="8.4" width="1" height="1" fill="#bbb"/></svg>
<svg style="left:21.0px;top:197.0px" width="10" height="10" viewBox="0 0 10 10"><path d="M2 8.8l.6-2.2 5.4-5.4 1.6 1.6L4.2 8.2z" fill="#e8e8e8"/><rect x="8.6" y="8.4" width="1" height="1" fill="#bbb"/></svg>
<div class="a" style="left:21px;top:206.5px;width:11px;height:11px;background:#2a2a2a;border-radius:1px"></div>
<svg style="left:21.0px;top:207.0px" width="10" height="10" viewBox="0 0 10 10"><rect x="1.8" y="1.8" width="6.4" height="6.4" fill="none" stroke="#e6e6e6" stroke-width=".9"/><path d="M1.8 1.8l6.4 6.4M8.2 1.8L1.8 8.2" stroke="#e6e6e6" stroke-width=".7"/><rect x="8.6" y="8.4" width="1" height="1" fill="#bbb"/></svg>
<svg style="left:21.0px;top:217.8px" width="10" height="10" viewBox="0 0 10 10"><rect x="2" y="2" width="6.4" height="6.4" fill="none" stroke="#cfcfcf" stroke-width=".9"/><rect x="8.6" y="8.4" width="1" height="1" fill="#bbb"/></svg>
<svg style="left:21.0px;top:229.6px" width="10" height="10" viewBox="0 0 10 10"><path d="M2 2l6 5M8 2L2 7" stroke="#e0e0e0" stroke-width=".9"/><circle cx="2.5" cy="7.8" r="1.2" fill="none" stroke="#e0e0e0" stroke-width=".8"/><circle cx="7.5" cy="7.8" r="1.2" fill="none" stroke="#e0e0e0" stroke-width=".8"/></svg>
<svg style="left:21.0px;top:239.5px" width="10" height="10" viewBox="0 0 10 10"><path d="M2 2.5v6h6" fill="none" stroke="#cfcfcf" stroke-width=".8"/><path d="M3.2 1.5L8 6.2 6 6.3 5 8z" fill="#e8e8e8"/><rect x="8.6" y="8.4" width="1" height="1" fill="#bbb"/></svg>
<svg style="left:21.0px;top:250.5px" width="10" height="10" viewBox="0 0 10 10"><rect x="2" y="1.8" width="6.5" height="6.8" fill="none" stroke="#cfcfcf" stroke-width=".8"/><rect x="2.8" y="2.6" width="5" height="5.2" fill="#9a9a9a"/></svg>
<svg style="left:21.0px;top:261.7px" width="10" height="10" viewBox="0 0 10 10"><rect x="2" y="1.8" width="6.5" height="6.8" fill="none" stroke="#cfcfcf" stroke-width=".8"/><rect x="2.8" y="4.5" width="5" height="3.3" fill="#b0b0b0"/></svg>
<svg style="left:21.0px;top:272.6px" width="10" height="10" viewBox="0 0 10 10"><rect x="2" y="1.8" width="6.5" height="6.8" fill="none" stroke="#cfcfcf" stroke-width=".8"/><path d="M3 3.8h4.5M3 5.2h4.5M3 6.6h3" stroke="#bdbdbd" stroke-width=".6"/><rect x="8.6" y="8.4" width="1" height="1" fill="#bbb"/></svg>
<svg style="left:21.0px;top:283.4px" width="10" height="10" viewBox="0 0 10 10"><path d="M2 8.8l.5-1.8 4-4 1.4 1.4-4 4z" fill="#d8d8d8"/><path d="M6.3 2.2l1.2-1.2 1.5 1.5-1.2 1.2" fill="#eee"/><rect x="8.6" y="8.4" width="1" height="1" fill="#bbb"/></svg>
<svg style="left:21.0px;top:294.2px" width="10" height="10" viewBox="0 0 10 10"><path d="M3 9L1.6 5.5l1-.4 1 1.3V2.2h1v3l.3-3.4h1l.1 3.4.5-2.8h1l-.2 3.3.6-1.8h.9L8 8.8z" fill="#e6e6e6"/></svg>
<svg style="left:21.0px;top:305.0px" width="10" height="10" viewBox="0 0 10 10"><circle cx="4.2" cy="4.2" r="2.4" fill="none" stroke="#e0e0e0" stroke-width="1"/><path d="M6 6l2.6 2.6" stroke="#e0e0e0" stroke-width="1.3"/></svg>
<svg style="left:19px;top:320px" width="5" height="5" viewBox="0 0 5 5"><rect x=".3" y=".3" width="2.6" height="2.6" fill="#fff" stroke="#222" stroke-width=".4"/><rect x="1.8" y="1.8" width="2.6" height="2.6" fill="none" stroke="#ddd" stroke-width=".6"/></svg>
<svg style="left:28px;top:320px" width="5" height="5" viewBox="0 0 5 5"><path d="M.8 1.2h2.8v2.8M2.6.3l1 .9-1 .9" fill="none" stroke="#ccc" stroke-width=".6"/></svg>
<svg style="left:18.8px;top:325.6px" width="14.5" height="13" viewBox="0 0 14.5 13"><rect x=".3" y=".3" width="9.6" height="9.2" fill="#fff" stroke="#2a2a2a" stroke-width=".6"/><path d="M.8 9L9.4 .8" stroke="#e3202a" stroke-width="1.7"/><rect x="4.8" y="3.5" width="9.4" height="9.3" fill="#fff" stroke="#2a2a2a" stroke-width=".6"/><rect x="6.7" y="5.4" width="5.6" height="5.5" fill="none" stroke="#1a1a1a" stroke-width="1.3"/><path d="M5.3 12.3l8.6-8.3" stroke="#e3202a" stroke-width="1.7"/></svg>
<svg style="left:19.5px;top:341.5px" width="6" height="6" viewBox="0 0 6 6"><rect x=".6" y=".6" width="4.6" height="4.6" fill="none" stroke="#bdbdbd" stroke-width=".7"/></svg>
<svg style="left:27px;top:341.5px" width="6" height="6" viewBox="0 0 6 6"><path d="M.8 1h4.2M2.9 1v4.6" stroke="#9a9a9a" stroke-width=".8"/></svg>
<svg style="left:21.3px;top:350.3px" width="10.6" height="7.8" viewBox="0 0 10.6 7.8"><rect x=".4" y=".4" width="9.8" height="7" fill="#fff" stroke="#1a1a1a" stroke-width="1"/><path d="M1.2 7L9.4 .9" stroke="#e3202a" stroke-width="1.5"/></svg>
<svg style="left:21.0px;top:363.0px" width="10" height="10" viewBox="0 0 10 10"><path d="M1.8 3.2h5.5v3.8H1.8z" fill="#d8d8d8"/><path d="M1.5 2.2h4" stroke="#888" stroke-width=".7"/><rect x="8.6" y="7.4" width="1" height="1" fill="#bbb"/></svg>
<div class="a" style="left:20.2px;top:375.9px;width:11.5px;height:8.4px;background:#262626;border-radius:1px"></div>
<svg style="left:23.3px;top:377.6px" width="6" height="5.4" viewBox="0 0 6 5.4"><rect x="0" y="0" width="5.6" height="5.2" fill="#c8c8c8"/><path d="M.6 1.8h4.4M.6 3.4h4.4" stroke="#8a8a8a" stroke-width=".5"/></svg>
<div class="a" style="left:30.5px;top:382.6px;width:1.2px;height:1.2px;background:#c0c0c0;"></div>
<svg style="left:3.5px;top:72.5px" width="7" height="6" viewBox="0 0 7 6"><path d="M1 1.2L3.5 4 6 1.2" fill="none" stroke="#d8d8d8" stroke-width="1.1"/><circle cx="3.5" cy="4.3" r="1.1" fill="#e0e0e0"/></svg>
<div class="a" style="left:816.5px;top:73px;width:7px;height:398px;background:#4a4a4a;"></div>
<div class="a" style="left:823px;top:73px;width:1px;height:398px;background:#3e3e3e;"></div>
<div class="a" style="left:816.8px;top:385.3px;width:6.2px;height:58.3px;background:#5f5f5f;border-radius:3px;border:.6px solid #6e6e6e"></div>
<div class="a" style="left:816.5px;top:67px;width:7px;height:6px;background:#2a2a2a;"></div>
<svg style="left:817.5px;top:68px" width="5" height="4" viewBox="0 0 5 4"><path d="M1 3l1.5-1.8L4 3" fill="none" stroke="#aaa" stroke-width=".7"/></svg>
<div class="a" style="left:824px;top:55px;width:72px;height:416px;background:#535353;"></div>
<div class="a" style="left:824px;top:55px;width:72px;height:4.6px;background:#424242;"></div>
<svg style="left:888px;top:55.8px" width="6" height="3" viewBox="0 0 6 3"><rect x="0" y="0" width="5.5" height="2.6" fill="#6a6a6a"/></svg>
<svg style="left:887px;top:60.8px" width="8" height="3" viewBox="0 0 8 3"><path d="M1 .3v2.4M3.5 .3v2.4M6 .3v2.4" stroke="#6a6a6a" stroke-width=".6"/></svg>
<div class="a" style="left:823.5px;top:61px;width:0.8px;height:410px;background:#474747;"></div>
<div class="a" style="left:824px;top:101.5px;width:72px;height:0.8px;background:#474747;"></div>
<div class="a" style="left:856.5px;top:104.5px;width:7.5px;height:0.8px;background:#3e3e3e;"></div>
<div class="a" style="left:824px;top:155.3px;width:72px;height:0.8px;background:#474747;"></div>
<div class="a" style="left:856.5px;top:158.3px;width:7.5px;height:0.8px;background:#3e3e3e;"></div>
<div class="a" style="left:824px;top:187.2px;width:72px;height:0.8px;background:#474747;"></div>
<div class="a" style="left:856.5px;top:190.2px;width:7.5px;height:0.8px;background:#3e3e3e;"></div>
<div class="a" style="left:824px;top:205.5px;width:72px;height:0.8px;background:#474747;"></div>
<div class="a" style="left:856.5px;top:208.5px;width:7.5px;height:0.8px;background:#3e3e3e;"></div>
<div class="a" style="left:824px;top:223.2px;width:72px;height:0.8px;background:#474747;"></div>
<div class="a" style="left:856.5px;top:226.2px;width:7.5px;height:0.8px;background:#3e3e3e;"></div>
<div class="a" style="left:824px;top:265.7px;width:72px;height:0.8px;background:#474747;"></div>
<div class="a" style="left:856.5px;top:268.7px;width:7.5px;height:0.8px;background:#3e3e3e;"></div>
<div class="a" style="left:824px;top:283.6px;width:72px;height:0.8px;background:#474747;"></div>
<div class="a" style="left:856.5px;top:286.6px;width:7.5px;height:0.8px;background:#3e3e3e;"></div>
<div class="a" style="left:824px;top:302px;width:72px;height:0.8px;background:#474747;"></div>
<div class="a" style="left:856.5px;top:305px;width:7.5px;height:0.8px;background:#3e3e3e;"></div>
<div class="a" style="left:824px;top:332.5px;width:72px;height:0.8px;background:#474747;"></div>
<div class="a" style="left:856.5px;top:335.5px;width:7.5px;height:0.8px;background:#3e3e3e;"></div>
<div class="a" style="left:856px;top:61.6px;width:8px;height:0.9px;background:#3e3e3e;"></div>
<svg style="left:827.5px;top:65.7px" width="9" height="9" viewBox="0 0 9 9"><path d="M1 7.5V3.5A3.5 3 0 0 1 8 3.5v4z" fill="#d0d0d0"/><path d="M4.5 1v7.8" stroke="#535353" stroke-width=".7"/><path d="M4.5 7.5v1.5" stroke="#bbb" stroke-width=".6"/></svg>
<div class="t" style="left:840.30px;top:67.62px;font-size:6.4px;color:#fafafa;font-weight:bold;transform:scaleX(0.764);transform-origin:0 0;text-shadow:.3px 0 0 rgba(255,255,255,.5)">Pages</div>
<svg style="left:827.5px;top:77.8px" width="9" height="9" viewBox="0 0 9 9"><path d="M4.5 .8L8.5 3 4.5 5.2.5 3z" fill="#dadada"/><path d="M.8 5l3.7 2 3.7-2M.8 6.8l3.7 2 3.7-2" fill="none" stroke="#dadada" stroke-width=".8"/></svg>
<div class="t" style="left:840.30px;top:79.72px;font-size:6.4px;color:#fafafa;font-weight:bold;transform:scaleX(0.742);transform-origin:0 0;text-shadow:.3px 0 0 rgba(255,255,255,.5)">Layers</div>
<svg style="left:827.5px;top:89.9px" width="9" height="9" viewBox="0 0 9 9"><path d="M3.8 2.8H2a1.7 1.7 0 0 0 0 3.4h1.8M5.2 2.8H7a1.7 1.7 0 0 1 0 3.4H5.2M3 4.5h3" fill="none" stroke="#d6d6d6" stroke-width=".8"/></svg>
<div class="t" style="left:840.30px;top:91.82px;font-size:6.4px;color:#fafafa;font-weight:bold;transform:scaleX(0.760);transform-origin:0 0;text-shadow:.3px 0 0 rgba(255,255,255,.5)">Links</div>
<svg style="left:827.5px;top:108.3px" width="9" height="9" viewBox="0 0 9 9"><path d="M.5 2.8h8M.5 4.8h8" stroke="#d6d6d6" stroke-width=".7"/><path d="M.5 7h8" stroke="#d6d6d6" stroke-width="1.3"/></svg>
<div class="t" style="left:840.30px;top:110.22px;font-size:6.4px;color:#fafafa;font-weight:bold;transform:scaleX(0.789);transform-origin:0 0;text-shadow:.3px 0 0 rgba(255,255,255,.5)">Stroke</div>
<svg style="left:827.5px;top:120.9px" width="9" height="9" viewBox="0 0 9 9"><rect x=".8" y="1.2" width="7.4" height="6.6" fill="none" stroke="#c8c8c8" stroke-width=".7"/><rect x="1.8" y="2.2" width="2.4" height="2.2" fill="#c8c8c8"/><rect x="4.6" y="4.6" width="2.4" height="2.2" fill="#c8c8c8"/><rect x="4.6" y="2.2" width="2.4" height="2.2" fill="#888"/></svg>
<div class="t" style="left:840.30px;top:122.82px;font-size:6.4px;color:#fafafa;font-weight:bold;transform:scaleX(0.773);transform-origin:0 0;text-shadow:.3px 0 0 rgba(255,255,255,.5)">Swatches</div>
<svg style="left:827.5px;top:132.9px" width="9" height="9" viewBox="0 0 9 9"><rect x=".8" y="1.2" width="7.4" height="6.6" fill="none" stroke="#c8c8c8" stroke-width=".7"/><rect x="1.8" y="2.4" width="3" height="4.2" fill="#aaa"/></svg>
<div class="t" style="left:840.30px;top:134.82px;font-size:6.4px;color:#fafafa;font-weight:bold;transform:scaleX(0.822);transform-origin:0 0;text-shadow:.3px 0 0 rgba(255,255,255,.5)">Gradient</div>
<svg style="left:827.5px;top:145.2px" width="9" height="9" viewBox="0 0 9 9"><path d="M1.5 1.2h6.2v7H1.5z" fill="none" stroke="#d0d0d0" stroke-width=".8"/><path d="M3.2 2.5l1.4 2.5 1.4-2.5M4.6 5v2" fill="none" stroke="#e0e0e0" stroke-width=".8"/></svg>
<div class="t" style="left:840.30px;top:147.12px;font-size:6.4px;color:#fafafa;font-weight:bold;transform:scaleX(0.805);transform-origin:0 0;text-shadow:.3px 0 0 rgba(255,255,255,.5)">CC Libraries</div>
<svg style="left:827.5px;top:163.5px" width="9" height="9" viewBox="0 0 9 9"><path d="M3.8 1.2C2.8 1 2.4 2 2.2 3L1.4 8.2M1 3.4h2.6M4.4 4l3 3.4M7.4 4l-3 3.4" fill="none" stroke="#d0d0d0" stroke-width=".8"/></svg>
<div class="t" style="left:840.30px;top:165.42px;font-size:6.4px;color:#fafafa;font-weight:bold;transform:scaleX(0.774);transform-origin:0 0;text-shadow:.3px 0 0 rgba(255,255,255,.5)">Effects</div>
<svg style="left:827.5px;top:175.9px" width="9" height="9" viewBox="0 0 9 9"><rect x=".8" y="1.2" width="7.4" height="6.8" fill="none" stroke="#d0d0d0" stroke-width=".8"/><path d="M2.4 6.4L6.4 2.6M3.6 6.6l3-3" stroke="#d8d8d8" stroke-width=".8"/></svg>
<div class="t" style="left:840.30px;top:177.82px;font-size:6.4px;color:#fafafa;font-weight:bold;transform:scaleX(0.815);transform-origin:0 0;text-shadow:.3px 0 0 rgba(255,255,255,.5)">Object Styles</div>
<svg style="left:827.5px;top:193.7px" width="9" height="9" viewBox="0 0 9 9"><path d="M4 1.2C2 1.2 2 4.4 4 4.4V1.2h2v2" fill="#dadada" stroke="#dadada" stroke-width=".6"/><circle cx="2.8" cy="7.2" r="1.2" fill="none" stroke="#d0d0d0" stroke-width=".7"/><path d="M6.5 5.5l1.3-1.3M5.8 6.8l2-2" stroke="#bbb" stroke-width=".6"/></svg>
<div class="t" style="left:840.30px;top:195.62px;font-size:6.4px;color:#fafafa;font-weight:bold;transform:scaleX(0.804);transform-origin:0 0;text-shadow:.3px 0 0 rgba(255,255,255,.5)">Paragraph Styles</div>
<svg style="left:827.5px;top:211.9px" width="9" height="9" viewBox="0 0 9 9"><path d="M1.8 7L4.6 1l2.8 6M2.8 5h3.6" fill="none" stroke="#d6d6d6" stroke-width=".8"/><circle cx="2.5" cy="8" r="1" fill="none" stroke="#ccc" stroke-width=".6"/></svg>
<div class="t" style="left:840.30px;top:213.82px;font-size:6.4px;color:#fafafa;font-weight:bold;transform:scaleX(0.799);transform-origin:0 0;text-shadow:.3px 0 0 rgba(255,255,255,.5)">Character Styles</div>
<svg style="left:827.5px;top:229.9px" width="9" height="9" viewBox="0 0 9 9"><path d="M6.4 2.2C6 1.4 5.3 1 4.4 1 3.2 1 2.4 1.7 2.4 2.6c0 2 4.2 1.3 4.2 3.5 0 1-1 1.7-2.2 1.7-1 0-1.8-.5-2.2-1.3M4.4 .2v8.6" fill="none" stroke="#dadada" stroke-width=".9"/><path d="M6.6 4.2h2" stroke="#bbb" stroke-width=".6"/></svg>
<div class="t" style="left:840.30px;top:231.82px;font-size:6.4px;color:#fafafa;font-weight:bold;transform:scaleX(0.798);transform-origin:0 0;text-shadow:.3px 0 0 rgba(255,255,255,.5)">Script Label</div>
<svg style="left:827.5px;top:242.2px" width="9" height="9" viewBox="0 0 9 9"><circle cx="2.6" cy="2.6" r="1.4" fill="none" stroke="#d6d6d6" stroke-width=".8"/><circle cx="6.6" cy="6.6" r="1.4" fill="none" stroke="#d6d6d6" stroke-width=".8"/><path d="M3.6 3.6l2 2M1.2 5.5h2M5.5 1.2v2" stroke="#d6d6d6" stroke-width=".8"/></svg>
<div class="t" style="left:840.30px;top:244.12px;font-size:6.4px;color:#fafafa;font-weight:bold;transform:scaleX(0.848);transform-origin:0 0;text-shadow:.3px 0 0 rgba(255,255,255,.5)">Data Merge</div>
<svg style="left:827.5px;top:254.5px" width="9" height="9" viewBox="0 0 9 9"><path d="M6.4 2.2C6 1.4 5.3 1 4.4 1 3.2 1 2.4 1.7 2.4 2.6c0 2 4.2 1.3 4.2 3.5 0 1-1 1.7-2.2 1.7-1 0-1.8-.5-2.2-1.3M4.4 .2v8.6" fill="none" stroke="#e0e0e0" stroke-width="1"/></svg>
<div class="t" style="left:840.30px;top:256.42px;font-size:6.4px;color:#fafafa;font-weight:bold;transform:scaleX(0.784);transform-origin:0 0;text-shadow:.3px 0 0 rgba(255,255,255,.5)">Scripts</div>
<svg style="left:827.5px;top:272.3px" width="9" height="9" viewBox="0 0 9 9"><path d="M5 2.2C3 2.2 2.4 3 2.4 4s.6 1.8 2.6 1.8V2.2h1.6v3.6" fill="#dadada" stroke="#dadada" stroke-width=".6"/><path d="M7.5 3.3h1.2M7.5 4.8h1.2" stroke="#999" stroke-width=".5"/></svg>
<div class="t" style="left:840.30px;top:274.22px;font-size:6.4px;color:#fafafa;font-weight:bold;transform:scaleX(0.816);transform-origin:0 0;text-shadow:.3px 0 0 rgba(255,255,255,.5)">Paragraph</div>
<svg style="left:827.5px;top:290.2px" width="9" height="9" viewBox="0 0 9 9"><path d="M1 8.5L3.8 .8l2.8 7.7M2 5.8h3.6M8.3 .5v8.5" fill="none" stroke="#d6d6d6" stroke-width=".8"/></svg>
<div class="t" style="left:840.30px;top:292.12px;font-size:6.4px;color:#fafafa;font-weight:bold;transform:scaleX(0.804);transform-origin:0 0;text-shadow:.3px 0 0 rgba(255,255,255,.5)">Character</div>
<svg style="left:827.5px;top:308.5px" width="9" height="9" viewBox="0 0 9 9"><path d="M.8 8.2h7.6" stroke="#dadada" stroke-width=".9"/><rect x="1.6" y="1.2" width="2.8" height="6" fill="#dadada"/><rect x="5" y="4" width="3" height="3.2" fill="#dadada"/></svg>
<div class="t" style="left:840.30px;top:310.42px;font-size:6.4px;color:#fafafa;font-weight:bold;transform:scaleX(0.813);transform-origin:0 0;text-shadow:.3px 0 0 rgba(255,255,255,.5)">Align</div>
<svg style="left:827.5px;top:320.9px" width="9" height="9" viewBox="0 0 9 9"><rect x=".6" y=".6" width="4" height="4" fill="none" stroke="#d0d0d0" stroke-width=".7"/><rect x="3.6" y="3.6" width="4.8" height="4.8" fill="#dadada"/><rect x="3.6" y="3.6" width="1" height="1" fill="#535353"/></svg>
<div class="t" style="left:840.30px;top:322.82px;font-size:6.4px;color:#fafafa;font-weight:bold;transform:scaleX(0.816);transform-origin:0 0;text-shadow:.3px 0 0 rgba(255,255,255,.5)">Pathfinder</div>
<div class="a" style="left:824px;top:333px;width:72px;height:138px;background:#545454;"></div>
</body></html>
